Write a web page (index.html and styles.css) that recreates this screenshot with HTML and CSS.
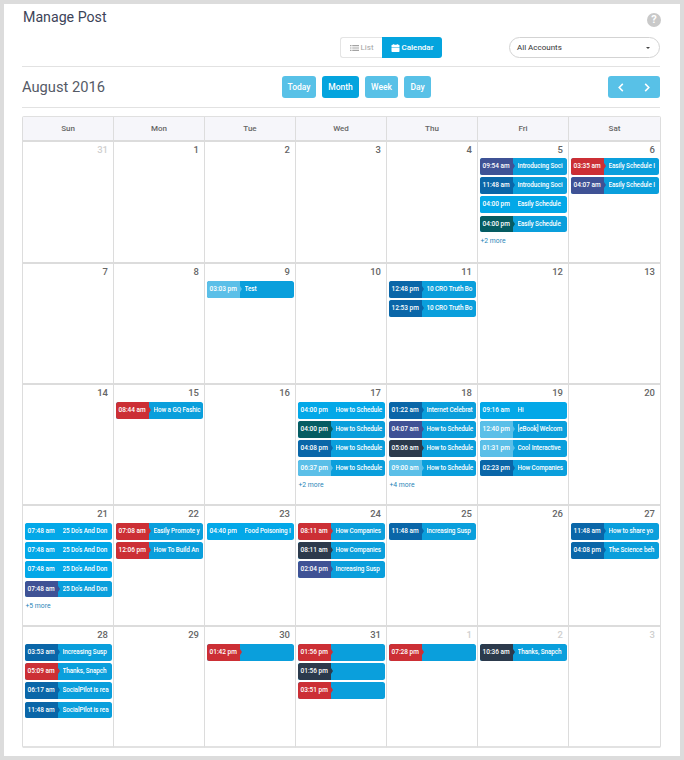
FILE: index.html
```html
<!DOCTYPE html>
<html lang="en">
<head>
<meta charset="utf-8">
<title>Manage Post</title>
<link rel="stylesheet" href="styles.css">
</head>
<body>
<main class="panel">
  <header class="head">
    <h1 class="title">Manage Post</h1>
    <span class="help">?</span>
  </header>
  <div class="filters">
    <div class="toggle">
      <span class="tg tg-list"><svg class="ic" viewBox="0 0 12 10"><path d="M0 1h2v1.6H0zM3 1h9v1.6H3zM0 4.2h2v1.6H0zM3 4.2h9v1.6H3zM0 7.4h2V9H0zM3 7.4h9V9H3z" fill="currentColor"/></svg>List</span>
      <span class="tg tg-cal"><svg class="ic" viewBox="0 0 11 11"><path d="M0 2.2A1 1 0 0 1 1 1.2h1.5V0h1.2v1.2h3.6V0h1.2v1.2H10a1 1 0 0 1 1 1V4H0zM0 4.8h11V10a1 1 0 0 1-1 1H1a1 1 0 0 1-1-1z" fill="currentColor"/></svg>Calendar</span>
    </div>
    <div class="select"><span>All Accounts</span><i class="caret"></i></div>
  </div>
  <div class="bar">
    <h2 class="month">August 2016</h2>
    <div class="views">
      <span class="btn b-today">Today</span>
      <span class="btn b-month on">Month</span>
      <span class="btn b-week">Week</span>
      <span class="btn b-day">Day</span>
    </div>
    <div class="pager">
      <svg class="chev" viewBox="0 0 8 10"><path d="M6 1 2 5l4 4" fill="none" stroke="currentColor" stroke-width="1.7"/></svg>
      <svg class="chev" viewBox="0 0 8 10"><path d="M2 1l4 4-4 4" fill="none" stroke="currentColor" stroke-width="1.7"/></svg>
    </div>
  </div>
  <section class="cal">
    <div class="dow">Sun</div><div class="dow">Mon</div><div class="dow">Tue</div><div class="dow">Wed</div><div class="dow">Thu</div><div class="dow">Fri</div><div class="dow">Sat</div>

    <div class="day"><div class="num mute">31</div></div>
    <div class="day"><div class="num">1</div></div>
    <div class="day"><div class="num">2</div></div>
    <div class="day"><div class="num">3</div></div>
    <div class="day"><div class="num">4</div></div>
    <div class="day"><div class="num">5</div>
      <div class="ev fb"><b>09:54 am</b><span>Introducing Soci</span></div>
      <div class="ev li"><b>11:48 am</b><span>Introducing Soci</span></div>
      <div class="ev df"><b>04:00 pm</b><span>Easily Schedule</span></div>
      <div class="ev tl"><b>04:00 pm</b><span>Easily Schedule</span></div>
      <div class="more">+2 more</div>
    </div>
    <div class="day"><div class="num">6</div>
      <div class="ev rd"><b>03:35 am</b><span>Easily Schedule I</span></div>
      <div class="ev fb"><b>04:07 am</b><span>Easily Schedule I</span></div>
    </div>

    <div class="day"><div class="num">7</div></div>
    <div class="day"><div class="num">8</div></div>
    <div class="day"><div class="num">9</div>
      <div class="ev lt"><b>03:03 pm</b><span>Test</span></div>
    </div>
    <div class="day"><div class="num">10</div></div>
    <div class="day"><div class="num">11</div>
      <div class="ev li"><b>12:48 pm</b><span>10 CRO Truth Bo</span></div>
      <div class="ev li"><b>12:53 pm</b><span>10 CRO Truth Bo</span></div>
    </div>
    <div class="day"><div class="num">12</div></div>
    <div class="day"><div class="num">13</div></div>

    <div class="day"><div class="num">14</div></div>
    <div class="day"><div class="num">15</div>
      <div class="ev rd"><b>08:44 am</b><span>How a GQ Fashic</span></div>
    </div>
    <div class="day"><div class="num">16</div></div>
    <div class="day"><div class="num">17</div>
      <div class="ev df"><b>04:00 pm</b><span>How to Schedule</span></div>
      <div class="ev tl"><b>04:00 pm</b><span>How to Schedule</span></div>
      <div class="ev li"><b>04:08 pm</b><span>How to Schedule</span></div>
      <div class="ev lt"><b>06:37 pm</b><span>How to Schedule</span></div>
      <div class="more">+2 more</div>
    </div>
    <div class="day"><div class="num">18</div>
      <div class="ev li"><b>01:22 am</b><span>Internet Celebrat</span></div>
      <div class="ev fb"><b>04:07 am</b><span>How to Schedule</span></div>
      <div class="ev dk"><b>05:06 am</b><span>How to Schedule</span></div>
      <div class="ev lt"><b>09:00 am</b><span>How to Schedule</span></div>
      <div class="more">+4 more</div>
    </div>
    <div class="day"><div class="num">19</div>
      <div class="ev df"><b>09:16 am</b><span>Hi</span></div>
      <div class="ev lt"><b>12:40 pm</b><span>[eBook] Welcom</span></div>
      <div class="ev lt"><b>01:31 pm</b><span>Cool Interactive</span></div>
      <div class="ev li"><b>02:23 pm</b><span>How Companies</span></div>
    </div>
    <div class="day"><div class="num">20</div></div>

    <div class="day"><div class="num">21</div>
      <div class="ev df"><b>07:48 am</b><span>25 Do's And Don</span></div>
      <div class="ev df"><b>07:48 am</b><span>25 Do's And Don</span></div>
      <div class="ev df"><b>07:48 am</b><span>25 Do's And Don</span></div>
      <div class="ev fb"><b>07:48 am</b><span>25 Do's And Don</span></div>
      <div class="more">+5 more</div>
    </div>
    <div class="day"><div class="num">22</div>
      <div class="ev rd"><b>07:08 am</b><span>Easily Promote y</span></div>
      <div class="ev rd"><b>12:06 pm</b><span>How To Build An</span></div>
    </div>
    <div class="day"><div class="num">23</div>
      <div class="ev df"><b>04:40 pm</b><span>Food Poisoning I</span></div>
    </div>
    <div class="day"><div class="num">24</div>
      <div class="ev rd"><b>08:11 am</b><span>How Companies</span></div>
      <div class="ev dk"><b>08:11 am</b><span>How Companies</span></div>
      <div class="ev fb"><b>02:04 pm</b><span>Increasing Susp</span></div>
    </div>
    <div class="day"><div class="num">25</div>
      <div class="ev li"><b>11:48 am</b><span>Increasing Susp</span></div>
    </div>
    <div class="day"><div class="num">26</div></div>
    <div class="day"><div class="num">27</div>
      <div class="ev li"><b>11:48 am</b><span>How to share yo</span></div>
      <div class="ev li"><b>04:08 pm</b><span>The Science beh</span></div>
    </div>

    <div class="day"><div class="num">28</div>
      <div class="ev li"><b>03:53 am</b><span>Increasing Susp</span></div>
      <div class="ev rd"><b>05:09 am</b><span>Thanks, Snapch</span></div>
      <div class="ev li"><b>06:17 am</b><span>SocialPilot is rea</span></div>
      <div class="ev li"><b>11:48 am</b><span>SocialPilot is rea</span></div>
    </div>
    <div class="day"><div class="num">29</div></div>
    <div class="day"><div class="num">30</div>
      <div class="ev rd"><b>01:42 pm</b><span></span></div>
    </div>
    <div class="day"><div class="num">31</div>
      <div class="ev rd"><b>01:56 pm</b><span></span></div>
      <div class="ev dk"><b>01:56 pm</b><span></span></div>
      <div class="ev rd"><b>03:51 pm</b><span></span></div>
    </div>
    <div class="day"><div class="num mute">1</div>
      <div class="ev rd"><b>07:28 pm</b><span></span></div>
    </div>
    <div class="day"><div class="num mute">2</div>
      <div class="ev dk"><b>10:36 am</b><span>Thanks, Snapch</span></div>
    </div>
    <div class="day"><div class="num mute">3</div></div>
  </section>
</main>
</body>
</html>
```
FILE: styles.css
```css
* { box-sizing: border-box; }
html, body { margin: 0; padding: 0; }
body {
  width: 684px;
  height: 760px;
  overflow: hidden;
  background: #dcdcdc;
  font-family: Roboto, "Liberation Sans", sans-serif;
  padding: 4px;
}
.panel {
  width: 676px;
  height: 752px;
  background: #fff;
  padding: 0 20px 0 18px;
}
.head {
  height: 33px;
  display: flex;
  align-items: flex-start;
  justify-content: space-between;
}
.title {
  margin: 3px 0 0 1px;
  font-size: 14.2px;
  line-height: 20px;
  font-weight: 400;
  color: #3d4459;
}
.help {
  width: 14px;
  height: 14px;
  margin: 9px -1px 0 0;
  border-radius: 50%;
  background: #c9c9c9;
  color: #fff;
  font-size: 11px;
  font-weight: 700;
  line-height: 14px;
  text-align: center;
}
.filters {
  box-sizing: content-box;
  height: 21px;
  padding-bottom: 8px;
  border-bottom: 1px solid #e2e2e2;
  display: flex;
  justify-content: flex-end;
  align-items: flex-start;
}
.toggle {
  display: flex;
  height: 21px;
  margin-right: 67px;
  font-size: 8px;
  font-weight: 400;
}
.tg {
  display: flex;
  align-items: center;
  justify-content: center;
  gap: 2px;
  height: 21px;
}
.tg-list {
  width: 42px;
  border: 1px solid #e4e4e4;
  border-right: 0;
  border-radius: 3px 0 0 3px;
  color: #a3a3a3;
}
.tg-cal {
  width: 60px;
  background: #04a4de;
  color: #fff;
  border-radius: 0 3px 3px 0;
  font-weight: 500;
}
.ic { width: 9px; height: 8px; flex: none; }
.select {
  width: 151px;
  height: 21px;
  border: 1px solid #d3d3d3;
  border-radius: 11px;
  padding: 0 9px 0 7px;
  display: flex;
  align-items: center;
  justify-content: space-between;
  font-size: 8px;
  font-weight: 400;
  color: #333;
}
.caret {
  width: 0;
  height: 0;
  border: 2px solid transparent;
  border-top: 2.5px solid #444;
  border-bottom: 0;
}
.bar {
  height: 41px;
  border-bottom: 1px solid #e2e2e2;
  display: flex;
  align-items: flex-start;
  padding-top: 9px;
}
.month {
  margin: 0;
  width: 260px;
  font-size: 14.7px;
  font-weight: 400;
  line-height: 22px;
  color: #555a66;
}
.views { display: flex; gap: 6px; width: 326px; }
.btn {
  height: 22px;
  border-radius: 3px;
  background: #58c1e7;
  color: #fff;
  font-size: 8.5px;
  font-weight: 500;
  line-height: 22px;
  text-align: center;
}
.b-today { width: 34px; }
.b-month { width: 37px; }
.b-week { width: 33px; }
.b-day { width: 27px; }
.btn.on { background: #04a4de; }
.pager {
  width: 52px;
  height: 22px;
  border-radius: 3px;
  background: #58c1e7;
  color: #fff;
  display: flex;
  align-items: center;
  justify-content: space-around;
}
.chev { width: 8px; height: 9px; }
.cal {
  margin-top: 8px;
  display: grid;
  grid-template-columns: repeat(7, 91px);
  grid-template-rows: 23px 122px repeat(3, 121px) 123px;
  width: 639px;
  border-left: 1px solid #ddd;
  border-top: 1px solid #e0e0e0;
  border-right: 1px solid #ddd;
  border-radius: 2px;
}
.dow {
  background: #f6f6fa;
  border-right: 1px solid #ddd;
  font-size: 8px;
  font-weight: 500;
  line-height: 23px;
  text-align: center;
  color: #666;
}
.dow:nth-child(7), .day:nth-child(7n) { border-right: 0; }
.day {
  border-top: 2px solid #dcdcdc;
  border-right: 1px solid #dcdcdc;
  padding: 0 1px 0 1.5px;
  min-width: 0;
}
.cal .day:nth-last-child(-n+7) { border-bottom: 2px solid #e2e2e2; }
.num {
  height: 17px;
  padding: 1px 4px 0 0;
  text-align: right;
  font-size: 9.5px;
  font-weight: 500;
  line-height: 14px;
  color: #666;
}
.day:nth-child(-n+14) .num { height: 16px; }
.num.mute { color: #cfcfcf; }
.ev {
  height: 16.5px;
  margin-bottom: 2.7px;
  border-radius: 2.5px;
  display: flex;
  overflow: hidden;
  background: #0a9fdc;
  color: #fff;
  font-size: 6.4px;
  font-weight: 500;
  letter-spacing: -.1px;
  line-height: 16.5px;
  white-space: nowrap;
}
.ev b {
  position: relative;
  flex: none;
  width: 33px;
  padding-left: 3px;
  font-size: 6.5px;
  font-weight: 500;
  letter-spacing: 0;
}
.ev b::after {
  content: "";
  position: absolute;
  top: 5px;
  right: -2px;
  border-left: 2px solid;
  border-left-color: inherit;
  border-top: 3px solid transparent;
  border-bottom: 3px solid transparent;
}
.ev span {
  flex: 1;
  min-width: 0;
  overflow: hidden;
  margin: 0 2px 0 5px;
}
.fb b { background: #3f5295; border-color: #3f5295; }
.li b { background: #0a66a8; border-color: #0a66a8; }
.tl b { background: #055c62; border-color: #055c62; }
.rd b { background: #cc2f35; border-color: #cc2f35; }
.lt b { background: #5bbfe8; border-color: #5bbfe8; }
.dk b { background: #2c3a4c; border-color: #2c3a4c; }
.df { background: #03a8e8; }
.df b { background: #03a8e8; border-color: #03a8e8; }
.more {
  margin-top: 1px;
  font-size: 6.8px;
  line-height: 12px;
  color: #1f86b8;
  padding-left: 1px;
}
```
